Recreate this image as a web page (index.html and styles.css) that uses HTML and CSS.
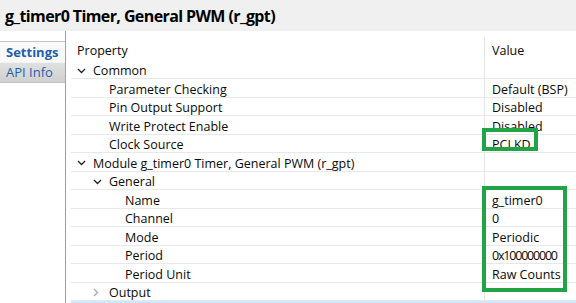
FILE: index.html
```html
<!DOCTYPE html>
<html lang="en">
<head>
    <meta charset="UTF-8">
    <meta name="viewport" content="width=device-width, initial-scale=1.0">
    <title>g_timer0 Timer, General PWM (r_gpt)</title>
    <link rel="stylesheet" href="styles.css">
</head>
<body>
    <div class="title-bar">g_timer0 Timer, General PWM (r_gpt)</div>
    <div class="content">
        <div class="tabs">
            <div class="tab active">Settings</div>
            <div class="tab">API Info</div>
        </div>
        <div class="main">
            <div class="grid">
                <div class="head prop-cell">Property</div>
                <div class="head value-cell">Value</div>

                <div class="prop-cell lvl-0"><span class="twisty"><svg width="9" height="6" viewBox="0 0 9 6"><path d="M1 1l3.5 3.5L8 1" fill="none" stroke="#222" stroke-width="1.3"/></svg></span>Common</div>
                <div class="value-cell"></div>
                <div class="prop-cell lvl-1"><span class="twisty"></span>Parameter Checking</div>
                <div class="value-cell">Default (BSP)</div>
                <div class="prop-cell lvl-1"><span class="twisty"></span>Pin Output Support</div>
                <div class="value-cell">Disabled</div>
                <div class="prop-cell lvl-1"><span class="twisty"></span>Write Protect Enable</div>
                <div class="value-cell">Disabled</div>
                <div class="prop-cell lvl-1"><span class="twisty"></span>Clock Source</div>
                <div class="value-cell">PCLKD</div>

                <div class="prop-cell lvl-0"><span class="twisty"><svg width="9" height="6" viewBox="0 0 9 6"><path d="M1 1l3.5 3.5L8 1" fill="none" stroke="#222" stroke-width="1.3"/></svg></span>Module g_timer0 Timer, General PWM (r_gpt)</div>
                <div class="value-cell"></div>
                <div class="prop-cell lvl-1"><span class="twisty"><svg width="9" height="6" viewBox="0 0 9 6"><path d="M1 1l3.5 3.5L8 1" fill="none" stroke="#222" stroke-width="1.3"/></svg></span>General</div>
                <div class="value-cell"></div>
                <div class="prop-cell lvl-2"><span class="twisty"></span>Name</div>
                <div class="value-cell">g_timer0</div>
                <div class="prop-cell lvl-2"><span class="twisty"></span>Channel</div>
                <div class="value-cell">0</div>
                <div class="prop-cell lvl-2"><span class="twisty"></span>Mode</div>
                <div class="value-cell">Periodic</div>
                <div class="prop-cell lvl-2"><span class="twisty"></span>Period</div>
                <div class="value-cell hex">0x100000000</div>
                <div class="prop-cell lvl-2"><span class="twisty"></span>Period Unit</div>
                <div class="value-cell">Raw Counts</div>
                <div class="prop-cell lvl-1"><span class="twisty"><svg width="6" height="9" viewBox="0 0 6 9"><path d="M1 1l3.5 3.5L1 8" fill="none" stroke="#a8a8a8" stroke-width="1.3"/></svg></span>Output</div>
                <div class="value-cell"></div>
                <div class="prop-cell selected"></div>
                <div class="value-cell selected"></div>
            </div>

            <!-- highlight boxes -->
            <div class="mark mark-clock"></div>
            <div class="mark mark-general"></div>
        </div>
    </div>
</body>
</html>
```

FILE: styles.css
```css
body {
    margin: 0;
    padding: 0;
    width: 576px;
    height: 303px;
    overflow: hidden;
    font-family: "Open Sans", "Noto Sans", sans-serif;
    font-size: 12.5px;
    color: #0a0a0a;
    background-color: #fff;
}

.title-bar {
    height: 31px;
    line-height: 32px;
    padding-left: 5px;
    background-color: #f0f0f0;
    font-size: 16px;
    font-weight: bold;
    color: #000;
    letter-spacing: -0.6px;
}

.content {
    display: flex;
    height: 272px;
    overflow: hidden;
}

.tabs {
    width: 65px;
    flex-shrink: 0;
    border-right: 1px solid #a0a0a0;
    padding-top: 10px;
}

.tab {
    height: 19px;
    line-height: 18px;
    padding-left: 6px;
    font-size: 13px;
    color: #1f5fae;
    background: linear-gradient(#e0e0e0, #d0d0d0);
    border-top: 1px solid #f4f4f4;
    border-bottom: 1px solid #c4c4c4;
}

.tab.active {
    height: 20px;
    line-height: 20px;
    font-weight: bold;
    background: #fafafa;
    border-top: 1px solid #c4c4c4;
    border-bottom: none;
}

.main {
    position: relative;
    flex: 1;
    padding-left: 5px;
    padding-top: 6px;
    overflow: hidden;
}

.grid {
    display: grid;
    grid-template-columns: 413px 1fr;
}

.prop-cell,
.value-cell {
    height: 18.5px;
    line-height: 15px;
    padding-top: 2.5px;
    box-sizing: border-box;
    border-bottom: 1px solid #e8e8e8;
    white-space: nowrap;
    overflow: hidden;
}

.prop-cell {
    display: flex;
    align-items: center;
}

.value-cell {
    padding-left: 7px;
    border-left: 1px solid #e6e6e6;
}

.hex {
    letter-spacing: -1.2px;
}

.head {
    height: 23.5px;
    line-height: 20px;
    padding-top: 4px;
    border-bottom: none;
    padding-left: 6px;
}

.head.value-cell {
    padding-left: 7px;
}

.twisty {
    width: 16px;
    flex-shrink: 0;
    display: flex;
    align-items: center;
}

.lvl-0 { padding-left: 6px; }
.lvl-1 { padding-left: 22px; }
.lvl-2 { padding-left: 38px; }

.selected {
    background-color: #cde8ff;
    border-bottom: none;
}

.mark {
    position: absolute;
    border: 4px solid #22a348;
    box-sizing: border-box;
}

.mark-clock {
    left: 416px;
    top: 97px;
    width: 56px;
    height: 23px;
}

.mark-general {
    left: 416px;
    top: 155px;
    width: 85px;
    height: 106px;
}
```
